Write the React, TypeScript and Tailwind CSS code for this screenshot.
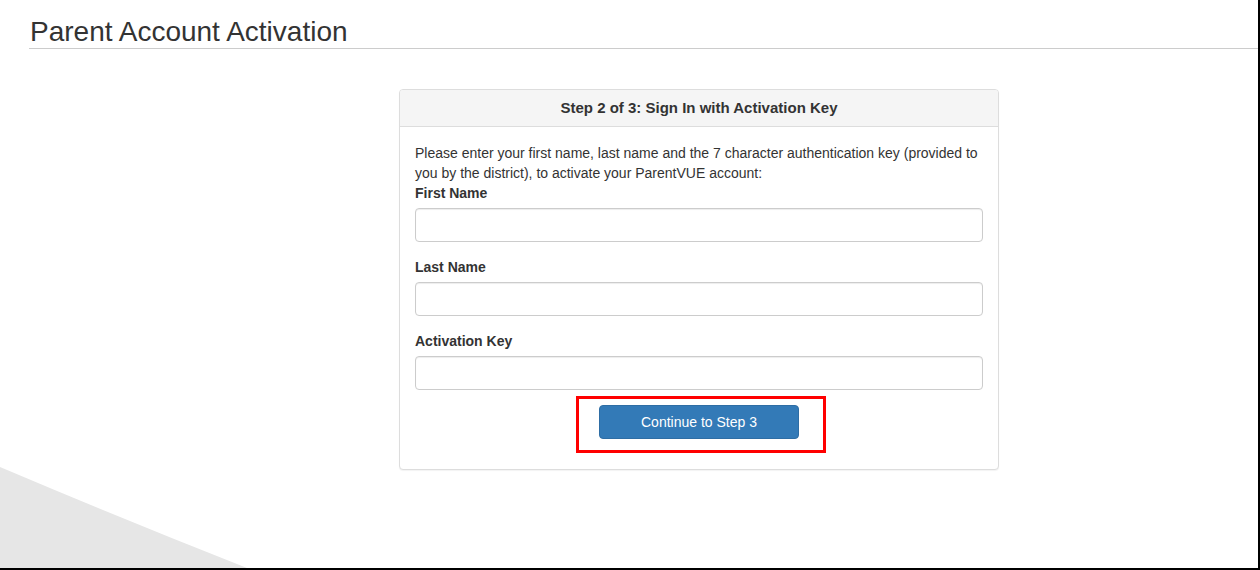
import React from "react";

function Field({ label }: { label: string }) {
  return (
    <div className="mb-[15px]">
      <label className="block font-bold text-[14px] leading-[20px] mb-[5px]">{label}</label>
      <input
        type="text"
        className="block w-full h-[34px] rounded-[4px] border border-[#cccccc] bg-white px-3 shadow-[inset_0_1px_1px_rgba(0,0,0,0.075)] outline-none"
      />
    </div>
  );
}

export default function App() {
  return (
    <div
      className="relative w-[1260px] h-[570px] overflow-hidden bg-white border-r-2 border-b-2 border-black text-[#333333]"
      style={{ fontFamily: '"Liberation Sans", Arial, sans-serif' }}
    >
      <svg className="absolute left-0 bottom-0" width="260" height="110" viewBox="0 0 260 110">
        <path d="M0 9 Q 125 62 247 110 L0 110 Z" fill="#e6e6e6" />
      </svg>
      <div className="relative">
        <div className="ml-[29px] border-b border-[#cccccc] h-[49px] pt-[16px]">
          <h1 className="text-[28px] leading-[31px] font-normal pl-[1px]">Parent Account Activation</h1>
        </div>
        <div className="pt-[40px] pl-[399px]">
          <div className="w-[600px] border border-[#dddddd] rounded-[4px] bg-white shadow-[0_1px_1px_rgba(0,0,0,0.05)]">
            <div className="h-[37px] flex items-center justify-center bg-[#f5f5f5] border-b border-[#dddddd] rounded-t-[3px] font-bold text-[15px]">
              Step 2 of 3: Sign In with Activation Key
            </div>
            <div className="px-[15px] pt-[16px] pb-[15px] text-[14px] leading-[20px]">
              <p>
                Please enter your first name, last name and the 7 character authentication key (provided to you by the district), to activate your ParentVUE account:
              </p>
              <Field label="First Name" />
              <Field label="Last Name" />
              <Field label="Activation Key" />
              <div className="flex justify-center mb-[15px]">
                <div className="relative">
                  <button className="w-[200px] h-[34px] rounded-[4px] bg-[#337ab7] border border-[#2e6da4] text-white text-[14px]">
                    Continue to Step 3
                  </button>
                  <div className="absolute -left-[23px] -right-[27px] -top-[9px] -bottom-[14px] border-[3px] border-[#ff0000] pointer-events-none" />
                </div>
              </div>
            </div>
          </div>
        </div>
      </div>
    </div>
  );
}
